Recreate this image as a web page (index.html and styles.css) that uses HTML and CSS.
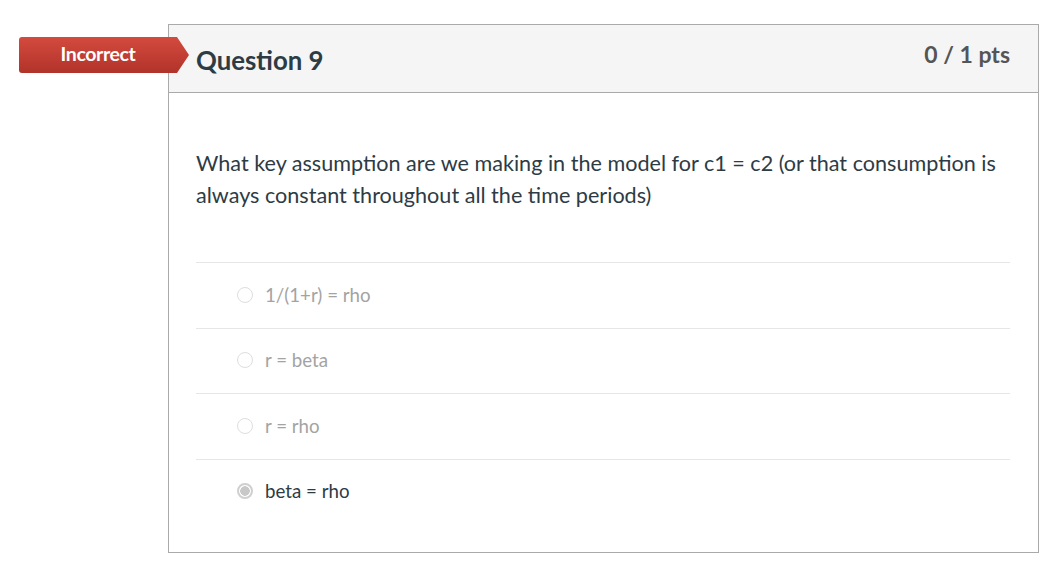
FILE: index.html
```html
<!DOCTYPE html>
<html>
<head>
<meta charset="utf-8">
<link rel="stylesheet" href="styles.css">
</head>
<body>
<div class="page">
  <div class="card">
    <div class="badge">Incorrect</div>
    <div class="header">
      <h2 class="title">Question 9</h2>
      <div class="pts">0 / 1 pts</div>
    </div>
    <div class="body">
      <p class="text">What key assumption are we making in the model for c1 = c2 (or that consumption is always constant throughout all the time periods)</p>
      <div class="answers">
        <div class="answer"><span class="radio"></span><span class="label">1/(1+r) = rho</span></div>
        <div class="answer"><span class="radio"></span><span class="label">r = beta</span></div>
        <div class="answer"><span class="radio"></span><span class="label">r = rho</span></div>
        <div class="answer selected"><span class="radio"></span><span class="label">beta = rho</span></div>
      </div>
    </div>
  </div>
</div>
</body>
</html>
```

FILE: styles.css
```css
html, body {
  margin: 0;
  padding: 0;
  background: #fff;
  font-family: Lato, "Liberation Sans", sans-serif;
}
.page {
  padding: 24px 17px 0 168px;
}
.card {
  position: relative;
  border: 1px solid #aaaaaa;
  width: 869px;
  height: 527px;
  box-sizing: content-box;
}
.badge {
  position: absolute;
  left: -150px;
  top: 12px;
  width: 170px;
  height: 36px;
  box-sizing: border-box;
  padding-right: 12px;
  background: linear-gradient(#d44a3e, #b1332a);
  color: #fff;
  font-weight: 700;
  font-size: 19.5px;
  line-height: 33px;
  text-align: center;
  border-radius: 3px 0 0 3px;
  clip-path: polygon(0 0, 158px 0, 170px 50%, 158px 100%, 0 100%);
  letter-spacing: -0.4px;
}
.header {
  display: flex;
  justify-content: space-between;
  align-items: flex-start;
  background: #f5f5f5;
  border-bottom: 1px solid #aaaaaa;
  height: 68px;
  box-sizing: border-box;
  padding: 0 28px 0 27px;
}
.title {
  margin: 0;
  padding-top: 19px;
  font-size: 25.8px;
  font-weight: 700;
  color: #2d3b45;
  line-height: 32px;
}
.pts {
  padding-top: 14px;
  font-size: 23px;
  font-weight: 700;
  color: #555;
  line-height: 30px;
}
.body {
  padding: 54px 28px 0 27px;
}
.text {
  margin: 0 0 51px;
  font-size: 21.6px;
  line-height: 32px;
  color: #2d3b45;
}
.answer {
  display: flex;
  align-items: center;
  gap: 12px;
  height: 65.5px;
  box-sizing: border-box;
  border-top: 1px solid #e6e6e6;
  padding-left: 41px;
  padding-bottom: 1px;
  font-size: 18.7px;
  color: #a3a3a3;
}
.radio {
  width: 16px;
  height: 16px;
  border: 1px solid #dedede;
  border-radius: 50%;
  background: #fff;
  box-sizing: border-box;
  flex: none;
}
.selected {
  color: #2d3b45;
}
.selected .radio {
  border: 2px solid #cfcfcf;
  background: radial-gradient(circle, #c8c8c8 0 4.5px, #fff 5px);
}
```
